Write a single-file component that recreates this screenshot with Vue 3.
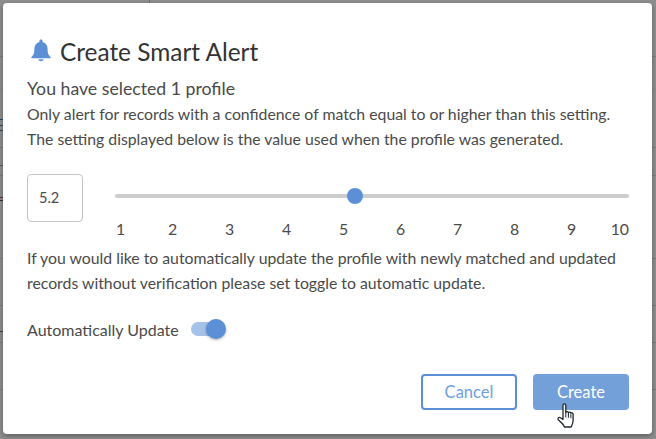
<template>
  <div class="backdrop">
    <span v-for="l in bgLines" :key="l.top" class="bg-line" :style="{ top: l.top + 'px', left: l.left + 'px', width: l.width + 'px', background: l.color }"></span>
    <span class="bg-line vertical"></span>
    <div class="modal">
      <div class="title-row">
        <svg class="bell" viewBox="0 0 20 24" width="20" height="24">
          <path d="M10 0.5c-1 0-1.600.7-1.600 1.600v.9C5.200 3.800 3.400 6.500 3.400 9.800c0 4.600-1 6.400-2.900 8.200-.4.4-.3 1.200.4 1.200h18.200c.7 0 .8-.8.4-1.200-1.900-1.800-2.900-3.600-2.900-8.200 0-3.300-1.800-6-5-6.800v-.9c0-.9-.6-1.600-1.600-1.600z" fill="#5b90d6"/>
          <path d="M7.300 20.300h5.400c-.3 1.200-1.400 2-2.700 2s-2.400-.8-2.700-2z" fill="#5b90d6"/>
        </svg>
        <h2 class="title">Create Smart Alert</h2>
      </div>
      <p class="lead">You have selected 1 profile</p>
      <p class="text">Only alert for records with a confidence of match equal to or higher than this setting.<br>The setting displayed below is the value used when the profile was generated.</p>

      <div class="slider-row">
        <div class="value-box">5.2</div>
        <div class="slider">
          <div class="track">
            <span class="thumb"></span>
          </div>
          <div class="ticks">
            <span v-for="n in ticks" :key="n" class="tick">{{ n }}</span>
          </div>
        </div>
      </div>

      <p class="text auto-text">If you would like to automatically update the profile with newly matched and updated<br>records without verification please set toggle to automatic update.</p>

      <div class="toggle-row">
        <span class="label">Automatically Update</span>
        <span class="toggle"><span class="knob"></span></span>
      </div>

      <div class="actions">
        <button class="btn cancel">Cancel</button>
        <button class="btn create">
          Create
          <svg class="hand" viewBox="0 0 20 26" width="20" height="26">
            <path d="M7 2.200c0-1.800 2.800-1.800 2.800 0v7.300c.2-1.200 2.500-1.200 2.600.3.300-1 2.400-1 2.500.5.500-.8 2.200-.5 2.200 1v6.200c0 3-1 4.500-2 6.500H8.500c-.8-2-3-4.500-6-7-1.500-1.500.2-3.300 2-2.200L7 16.500z" fill="#fff" stroke="#1e2430" stroke-width="1.300" stroke-linejoin="round"/>
            <path d="M9.800 9.500v5M12.400 9.800v5M14.900 11.300v4" stroke="#1e2430" stroke-width="1" fill="none"/>
          </svg>
        </button>
      </div>
    </div>
  </div>
</template>

<script setup>
const ticks = [1, 2, 3, 4, 5, 6, 7, 8, 9, 10]

// bits of the page behind the dimmed overlay
const bgLines = [
  { top: 56, left: 0, width: 656, color: '#7c7c7c' },
  { top: 89, left: 0, width: 656, color: '#878787' },
  { top: 119, left: 0, width: 3, color: '#2f4a63' },
  { top: 125, left: 0, width: 3, color: '#2f4a63' },
  { top: 130, left: 0, width: 3, color: '#2f4a63' },
  { top: 147, left: 0, width: 656, color: '#7c7c7c' },
  { top: 165, left: 0, width: 3, color: '#555' },
  { top: 175, left: 0, width: 656, color: '#7c7c7c' },
  { top: 197, left: 0, width: 3, color: '#6b2a2a' },
  { top: 200, left: 0, width: 3, color: '#333' },
  { top: 258, left: 0, width: 656, color: '#7c7c7c' },
  { top: 305, left: 0, width: 656, color: '#7c7c7c' },
  { top: 331, left: 0, width: 3, color: '#444' },
  { top: 342, left: 0, width: 656, color: '#7c7c7c' },
  { top: 389, left: 0, width: 656, color: '#7c7c7c' },
]
</script>

<style>
html, body {
  margin: 0;
  background: #8e8e8e;
}
</style>

<style scoped>
.backdrop {
  position: relative;
  width: 656px;
  height: 439px;
  overflow: hidden;
  background: #8e8e8e;
  padding: 3px 4px 5px 3px;
  box-sizing: border-box;
  font-family: Lato, "Open Sans", sans-serif;
}

.bg-line {
  position: absolute;
  height: 1px;
}

.bg-line.vertical {
  left: 149px;
  top: 0;
  width: 1px;
  height: 3px;
  background: #6f6f6f;
}

.modal {
  position: relative;
  height: 431px;
  box-sizing: border-box;
  background: #fff;
  border-radius: 4px;
  box-shadow: 0 2px 5px rgba(0, 0, 0, 0.35);
  padding: 35px 23px 0 24px;
  display: flex;
  flex-direction: column;
  color: #4a4a4a;
}

.title-row {
  display: flex;
  align-items: center;
  gap: 9px;
  height: 26px;
  padding-left: 4px;
}

.bell {
  flex: none;
}

.title {
  margin: 2px 0 0;
  font-size: 24.4px;
  font-weight: 400;
  color: #333;
  line-height: 26px;
}

.lead {
  margin: 13px 0 0;
  font-size: 17.7px;
  line-height: 24px;
}

.text {
  margin: 0;
  font-size: 15.8px;
  line-height: 25px;
}

.slider-row {
  display: flex;
  margin-top: 23px;
}

.value-box {
  width: 56px;
  height: 48px;
  box-sizing: border-box;
  border: 1px solid #c4c4c4;
  border-radius: 4px;
  padding-left: 11px;
  font-size: 14.5px;
  line-height: 46px;
}

.slider {
  margin-left: 32px;
  width: 514px;
  padding-top: 20px;
}

.track {
  position: relative;
  height: 4px;
  background: #ccc;
  border-radius: 2px;
}

.thumb {
  position: absolute;
  left: 232px;
  top: -6px;
  width: 16px;
  height: 16px;
  border-radius: 50%;
  background: #5b90d6;
}

.ticks {
  display: grid;
  grid-template-columns: 1fr repeat(8, 57px) 1fr;
  margin-top: 21px;
  font-size: 15.8px;
  line-height: 20px;
  text-align: center;
}

.tick:first-child {
  text-align: left;
  padding-left: 1px;
}

.tick:last-child {
  text-align: right;
}

.auto-text {
  margin-top: 6px;
}

.toggle-row {
  display: flex;
  align-items: center;
  gap: 12px;
  margin-top: 22px;
  height: 24px;
}

.label {
  font-size: 16px;
  line-height: 25px;
}

.toggle {
  position: relative;
  width: 30px;
  height: 14px;
  border-radius: 7px;
  background: #a5c2e9;
}

.knob {
  position: absolute;
  right: -5px;
  top: -3px;
  width: 20px;
  height: 20px;
  border-radius: 50%;
  background: #5b90d6;
  box-shadow: 0 1px 3px rgba(0, 0, 0, 0.3);
}

.actions {
  display: flex;
  justify-content: flex-end;
  gap: 16px;
  margin-top: auto;
  padding-bottom: 24px;
}

.btn {
  position: relative;
  width: 96px;
  height: 36px;
  box-sizing: border-box;
  border-radius: 4px;
  font-family: inherit;
  font-size: 16.5px;
  padding: 0;
}

.cancel {
  background: #fff;
  border: 2px solid #5b90d6;
  color: #6f9fdc;
}

.create {
  background: #74a0d9;
  border: 0;
  color: #fff;
}

.hand {
  position: absolute;
  left: 23px;
  top: 29px;
}
</style>
